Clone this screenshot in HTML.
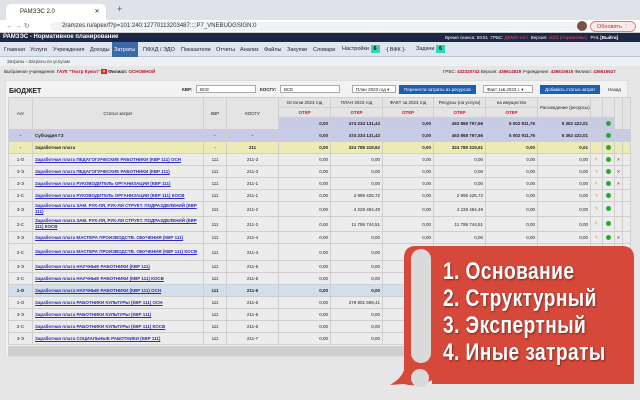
<!DOCTYPE html>
<html><head><meta charset="utf-8"><style>
*{box-sizing:border-box;margin:0;padding:0}
body{width:640px;height:400px;overflow:hidden;background:#e6e6e6;font-family:"Liberation Sans",sans-serif;position:relative;font-size:5px;color:#222}
.abs{position:absolute}
#tabs{left:0;top:0;width:640px;height:20px;background:#dfe2e7}
#tab{left:6px;top:4px;width:100px;height:16px;background:#fff;border-radius:5px 5px 0 0;font-size:6px;padding:4px 0 0 14px}
#addr{left:0;top:20px;width:640px;height:13px;background:#fff;border-bottom:1px solid #ccc}
#url{left:50px;top:22px;width:540px;height:9px;background:#f0f2f4;border-radius:5px;font-size:6px;padding:1px 0 0 12px;color:#333}
#upd{left:590px;top:21px;width:46px;height:11px;border:1px solid #e08080;border-radius:6px;background:#fbeaea;color:#b33;font-size:5.5px;padding:2px 0 0 6px}
#app{left:0;top:33px;width:640px;height:9px;background:#1e2846;color:#fff;font-weight:bold;font-size:6px;padding:1px 3px}
#menu{left:0;top:42px;width:640px;height:15px;background:#dfe5ee;border-bottom:1px solid #b9c4d4;font-size:5.5px;color:#223}
#menu span{position:absolute;top:5px;white-space:nowrap}
#menu span.badge{position:static}
.badge{background:#33d4b8;color:#000;padding:1px 3px;font-weight:bold}
#crumb{left:0;top:57px;width:640px;height:9px;background:#eceff3;font-size:4.5px;padding:2px 7px;color:#333}
#info{left:0;top:66px;width:640px;height:11px;font-size:4.5px;padding:3px 4px}
.red{color:#b5102a;font-weight:bold}
#frame{left:5px;top:80px;width:623px;height:277px;background:#f2f2f2;border:1px solid #ddd}
table{position:absolute;left:8px;top:97px;width:622px;border-collapse:collapse;table-layout:fixed;font-size:4.5px}
td{border:1px solid #cfcfcf;height:12px;padding:0 2px;background:#ececec;text-align:right;white-space:nowrap;overflow:hidden}
td.l{text-align:left}td.c{text-align:center}
a{color:#2a2ac0;text-decoration:underline;font-weight:bold}
.hd td{background:#e4e4e4;text-align:center;height:10px}
.ot{color:#d01020;font-weight:bold}
.sub td{background:#c8cbe6;font-weight:bold}
.zp td{background:#ecebb4;font-weight:bold}
.hl td{background:#d2deea;font-weight:bold}
.g{display:inline-block;width:5px;height:5px;border-radius:50%;background:#2aa830}
.x{color:#d01010;font-weight:bold}
.p{color:#d0a030}
td.w{white-space:normal;line-height:6px}
#foot{left:8px;top:346px;width:614px;height:10px;background:#cfcfcf}
.btn{background:#1b5fb3;color:#fff;font-size:4.5px;padding:2px 5px;position:absolute}
.sel{background:#fff;border:1px solid #aaa;font-size:4.5px;padding:1px 3px;position:absolute;height:8px}
#ov{left:0;top:0}
.t{position:absolute;left:443px;color:#fff;font-family:"Liberation Sans",sans-serif;font-weight:bold;font-size:24px;letter-spacing:0.5px;text-shadow:1px 1px 2px rgba(0,0,0,.45);line-height:24px;transform:scaleX(0.8);transform-origin:0 0;white-space:nowrap}
</style></head><body>
<div id="tabs" class="abs"></div>
<div id="tab" class="abs">РАМЗЭС 2.0 <span style="margin-left:38px">✕</span></div>
<div class="abs" style="left:117px;top:4px;font-size:9px;color:#555">+</div>
<div id="addr" class="abs"></div>
<div class="abs" style="left:6px;top:22px;font-size:7px;color:#777">← → ↻</div>
<div id="url" class="abs">2ramzes.ru/apex/f?p=101:240:12770113203487::::P7_VNEBUDGSIGN:0</div>
<div class="abs" style="left:577px;top:21px;width:10px;height:10px;border-radius:50%;background:#7a5040"></div>
<div id="upd" class="abs">Обновить ⋮</div>
<div id="app" class="abs">РАМЗЭС - Нормативное планирование<span style="position:absolute;left:445px;top:2px;font-size:4.5px;font-weight:normal">Время сеанса: 59:51 &nbsp;ГРБС: <span style="color:#e55">ДЕМО-тест</span> &nbsp;Версия: <span style="color:#e55">2023 (Нормативы)</span> &nbsp; РНL <b>[Выйти]</b></span></div>
<div id="menu" class="abs">
<span style="left:4px">Главная</span><span style="left:30px">Услуги</span><span style="left:53px">Учреждения</span><span style="left:90px">Доходы</span>
<span style="left:112px;top:0;height:15px;width:26px;background:#3b6aa6;color:#fff;padding:5px 2px">Затраты</span>
<span style="left:143px">ПФХД / ЭДО</span><span style="left:181px">Показатели</span><span style="left:216px">Отчеты</span><span style="left:240px">Анализ</span><span style="left:264px">Файлы</span><span style="left:287px">Закупки</span><span style="left:313px">Словари</span>
<span style="left:342px;top:4px">Настройки <span class="badge">6</span></span><span style="left:385px">-[ ВФК ]-</span><span style="left:416px;top:4px">Задачи <span class="badge">6</span></span>
</div>
<div id="crumb" class="abs">Затраты › Затраты по услугам</div>
<div id="info" class="abs">Выбранное учреждение: <span class="red">ГАУК "Театр Кукол"</span> <span style="background:#d22;color:#fff;padding:0 1px">✕</span> <b>Филиал:</b> <span class="red">ОСНОВНОЙ</span>
<span style="position:absolute;left:443px">ГРБС: <span class="red">432320742</span> Версия: <span class="red">436614819</span> Учреждение: <span class="red">436615615</span> Филиал: <span class="red">436615627</span></span></div>
<div id="frame" class="abs"></div>
<div class="abs" style="left:9px;top:88px;font-size:7px;font-weight:bold">БЮДЖЕТ</div>
<div class="abs" style="left:182px;top:87px;font-size:4.5px;font-weight:bold">КВР:</div><div class="sel" style="left:196px;top:85px;width:60px">ВСЕ</div>
<div class="abs" style="left:260px;top:87px;font-size:4.5px;font-weight:bold">КОСГУ:</div><div class="sel" style="left:280px;top:85px;width:60px">ВСЕ</div>
<div class="sel" style="left:352px;top:85px;width:44px">План 2023 год ▾</div>
<div class="btn" style="left:399px;top:85px">Перенести затраты из ресурсов</div>
<div class="sel" style="left:483px;top:85px;width:50px">Факт 1кв.2023 г. ▾</div>
<div class="btn" style="left:540px;top:85px">Добавить статью затрат</div>
<div class="abs" style="left:608px;top:87px;font-size:4.5px">Назад</div>
<table>
<colgroup><col style="width:24px"><col style="width:171px"><col style="width:23px"><col style="width:52px"><col style="width:52px"><col style="width:52px"><col style="width:51px"><col style="width:52px"><col style="width:52px"><col style="width:53px"><col style="width:12px"><col style="width:12px"><col style="width:8px"><col style="width:8px"></colgroup>
<tr class="hd"><td rowspan="3">Алг</td><td rowspan="3">Статья затрат</td><td rowspan="3">КВР</td><td rowspan="3">КОСГУ</td><td>Остатки 2023 год</td><td>ПЛАН 2023 год</td><td>ФАКТ за 2023 год</td><td>Ресурсы (на услуги)</td><td>на имущество</td><td rowspan="2">Расхождение (ресурсы)</td><td rowspan="2"></td><td rowspan="2"></td><td rowspan="3"></td><td rowspan="3"></td></tr>
<tr class="hd"><td class="ot">ОТКР</td><td class="ot">ОТКР</td><td class="ot">ОТКР</td><td class="ot">ОТКР</td><td class="ot">ОТКР</td></tr>
<tr class="sub"><td>0,00</td><td>474 234 131,43</td><td>0,00</td><td>463 868 797,66</td><td>5 002 911,76</td><td>5 362 422,01</td><td></td><td class="c"><i class="g"></i></td></tr>
<tr class="sub"><td class="c">-</td><td class="l">Субсидия ГЗ</td><td class="c">-</td><td class="c">-</td><td>0,00</td><td>474 234 131,43</td><td>0,00</td><td>463 868 797,66</td><td>5 002 911,76</td><td>5 362 422,01</td><td></td><td class="c"><i class="g"></i></td><td></td><td></td></tr>
<tr class="zp"><td class="c">-</td><td class="l">Заработная плата</td><td class="c">-</td><td class="c">211</td><td>0,00</td><td>324 789 319,62</td><td>0,00</td><td>324 789 319,61</td><td>0,00</td><td>0,01</td><td></td><td class="c"><i class="g"></i></td><td></td><td></td></tr>
<tr><td class="c">1-О</td><td class="l"><a>Заработная плата ПЕДАГОГИЧЕСКИЕ РАБОТНИКИ (КВР 111) ОСН</a></td><td class="c">111</td><td class="c">211-3</td><td>0,00</td><td>0,00</td><td>0,00</td><td>0,00</td><td>0,00</td><td>0,00</td><td class="c p">✎</td><td class="c"><i class="g"></i></td><td class="c x">×</td><td></td></tr>
<tr><td class="c">3-Э</td><td class="l"><a>Заработная плата ПЕДАГОГИЧЕСКИЕ РАБОТНИКИ (КВР 111)</a></td><td class="c">111</td><td class="c">211-3</td><td>0,00</td><td>0,00</td><td>0,00</td><td>0,00</td><td>0,00</td><td>0,00</td><td class="c p">✎</td><td class="c"><i class="g"></i></td><td class="c x">×</td><td></td></tr>
<tr><td class="c">3-Э</td><td class="l"><a>Заработная плата РУКОВОДИТЕЛЬ ОРГАНИЗАЦИИ (КВР 111)</a></td><td class="c">111</td><td class="c">211-1</td><td>0,00</td><td>0,00</td><td>0,00</td><td>0,00</td><td>0,00</td><td>0,00</td><td class="c p">✎</td><td class="c"><i class="g"></i></td><td class="c x">×</td><td></td></tr>
<tr><td class="c">2-С</td><td class="l"><a>Заработная плата РУКОВОДИТЕЛЬ ОРГАНИЗАЦИИ (КВР 111) КОСВ</a></td><td class="c">111</td><td class="c">211-1</td><td>0,00</td><td>2 995 425,72</td><td>0,00</td><td>2 995 425,72</td><td>0,00</td><td>0,00</td><td class="c p">✎</td><td class="c"><i class="g"></i></td><td></td><td></td></tr>
<tr><td class="c" style="height:15px">3-Э</td><td class="l w"><a>Заработная плата ЗАМ. РУК-ЛЯ, РУК-ЛИ СТРУКТ. ПОДРАЗДЕЛЕНИЙ (КВР 111)</a></td><td class="c">111</td><td class="c">211-2</td><td>0,00</td><td>4 228 494,49</td><td>0,00</td><td>4 228 494,49</td><td>0,00</td><td>0,00</td><td class="c p">✎</td><td class="c"><i class="g"></i></td><td></td><td></td></tr>
<tr><td class="c" style="height:15px">2-С</td><td class="l w"><a>Заработная плата ЗАМ. РУК-ЛЯ, РУК-ЛИ СТРУКТ. ПОДРАЗДЕЛЕНИЙ (КВР 111) КОСВ</a></td><td class="c">111</td><td class="c">211-2</td><td>0,00</td><td>11 795 744,51</td><td>0,00</td><td>11 795 744,51</td><td>0,00</td><td>0,00</td><td class="c p">✎</td><td class="c"><i class="g"></i></td><td></td><td></td></tr>
<tr><td class="c" style="height:11px">3-Э</td><td class="l"><a>Заработная плата МАСТЕРА ПРОИЗВОДСТВ. ОБУЧЕНИЯ (КВР 111)</a></td><td class="c">111</td><td class="c">211-4</td><td>0,00</td><td>0,00</td><td>0,00</td><td>0,00</td><td>0,00</td><td>0,00</td><td class="c p">✎</td><td class="c"><i class="g"></i></td><td class="c x">×</td><td></td></tr>
<tr><td class="c" style="height:17px">2-С</td><td class="l w"><a>Заработная плата МАСТЕРА ПРОИЗВОДСТВ. ОБУЧЕНИЯ (КВР 111) КОСВ</a></td><td class="c">111</td><td class="c">211-4</td><td>0,00</td><td>0,00</td><td>0,00</td><td>0,00</td><td>0,00</td><td>0,00</td><td></td><td></td><td></td><td></td></tr>
<tr><td class="c">3-Э</td><td class="l"><a>Заработная плата НАУЧНЫЕ РАБОТНИКИ (КВР 111)</a></td><td class="c">111</td><td class="c">211-5</td><td>0,00</td><td>0,00</td><td>0,00</td><td>0,00</td><td>0,00</td><td>0,00</td><td></td><td></td><td></td><td></td></tr>
<tr><td class="c">2-С</td><td class="l"><a>Заработная плата НАУЧНЫЕ РАБОТНИКИ (КВР 111) КОСВ</a></td><td class="c">111</td><td class="c">211-5</td><td>0,00</td><td>0,00</td><td>0,00</td><td>0,00</td><td>0,00</td><td>0,00</td><td></td><td></td><td></td><td></td></tr>
<tr class="hl"><td class="c">1-О</td><td class="l"><a>Заработная плата НАУЧНЫЕ РАБОТНИКИ (КВР 111) ОСН</a></td><td class="c">111</td><td class="c">211-5</td><td>0,00</td><td>0,00</td><td>0,00</td><td>0,00</td><td>0,00</td><td>0,00</td><td></td><td></td><td></td><td></td></tr>
<tr><td class="c">1-О</td><td class="l"><a>Заработная плата РАБОТНИКИ КУЛЬТУРЫ (КВР 111) ОСН</a></td><td class="c">111</td><td class="c">211-6</td><td>0,00</td><td>279 801 698,41</td><td>0,00</td><td>0,00</td><td>0,00</td><td>0,00</td><td></td><td></td><td></td><td></td></tr>
<tr><td class="c">3-Э</td><td class="l"><a>Заработная плата РАБОТНИКИ КУЛЬТУРЫ (КВР 111)</a></td><td class="c">111</td><td class="c">211-6</td><td>0,00</td><td>0,00</td><td>0,00</td><td>0,00</td><td>0,00</td><td>0,00</td><td></td><td></td><td></td><td></td></tr>
<tr><td class="c">2-С</td><td class="l"><a>Заработная плата РАБОТНИКИ КУЛЬТУРЫ (КВР 111) КОСВ</a></td><td class="c">111</td><td class="c">211-6</td><td>0,00</td><td>0,00</td><td>0,00</td><td>0,00</td><td>0,00</td><td>0,00</td><td></td><td></td><td></td><td></td></tr>
<tr><td class="c" style="height:11px">3-Э</td><td class="l"><a>Заработная плата СОЦИАЛЬНЫЕ РАБОТНИКИ (КВР 111)</a></td><td class="c">111</td><td class="c">211-7</td><td>0,00</td><td>0,00</td><td>0,00</td><td>0,00</td><td>0,00</td><td>0,00</td><td></td><td></td><td></td><td></td></tr>
</table>
<div id="foot" class="abs"></div>
<svg id="ov" class="abs" width="640" height="400">
<path d="M404 258 Q404 246 416 246 L622 246 Q634 246 634 258 L634 384 L432 384 L432 380 Q418 388 404 384 L390 385 Q402 378 404 370 Z" fill="#d5483a"/>
<rect x="411" y="249" width="20" height="114" rx="10" fill="#dadada"/>
<circle cx="420" cy="378" r="9" fill="#dadada"/>
</svg>
<div class="t" style="top:260px">1. Основание</div>
<div class="t" style="top:287px">2. Структурный</div>
<div class="t" style="top:314px">3. Экспертный</div>
<div class="t" style="top:341px">4. Иные затраты</div>
</body></html>
